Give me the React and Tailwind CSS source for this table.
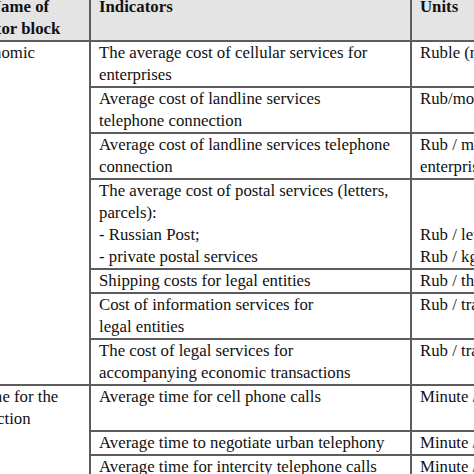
import React from "react";

const rows = [
  {
    left: [{ text: "Economic", ml: "ml-[5px]" }],
    span: 7,
    ind: ["The average cost of cellular services for", "enterprises"],
    units: ["Ruble (month)"],
  },
  {
    ind: ["Average cost of landline services", "telephone connection"],
    units: ["Rub/month"],
  },
  {
    ind: ["Average cost of landline services telephone", "connection"],
    units: ["Rub / month /", "enterprise"],
  },
  {
    ind: [
      "The average cost of postal services (letters,",
      "parcels):",
      "- Russian Post;",
      "- private postal services",
    ],
    units: ["\u00a0", "\u00a0", "Rub / letter", "Rub / kg"],
  },
  {
    ind: ["Shipping costs for legal entities"],
    units: ["Rub / thousand"],
  },
  {
    ind: ["Cost of information services for", "legal entities"],
    units: ["Rub / transaction"],
  },
  {
    ind: ["The cost of legal services for", "accompanying economic transactions"],
    units: ["Rub / transaction"],
  },
  {
    left: [
      { text: "Time for the", ml: "ml-[13px]" },
      { text: "transaction", ml: "ml-[-5px]" },
    ],
    span: 3,
    ind: ["Average time for cell phone calls", "\u00a0"],
    units: ["Minute / call"],
  },
  {
    ind: ["Average time to negotiate urban telephony"],
    units: ["Minute / call"],
  },
  {
    ind: ["Average time for intercity telephone calls"],
    units: ["Minute / call"],
  },
];

const Lines = ({ items }) =>
  items.map((t, i) => (
    <div key={i} className="whitespace-nowrap">
      {t}
    </div>
  ));

export default function App() {
  return (
    <div className="w-[474px] h-[474px] overflow-hidden bg-white font-['Liberation_Serif','Times_New_Roman',serif]">
      <table className="table-fixed w-[650px] border-collapse mt-[-6px] ml-[-40px] text-[16.8px] leading-[22px] text-[#111]">
        <thead>
          <tr className="bg-[#e4e4e4]">
            <th className="w-[129px] border-2 border-[#5c5c5c] p-0 text-left align-top font-bold">
              <div className="whitespace-nowrap ml-[27px]">Name of</div>
              <div className="whitespace-nowrap ml-[-10px]">indicator block</div>
            </th>
            <th className="w-[321px] border-2 border-[#5c5c5c] px-2 py-0 text-left align-top font-bold">
              Indicators
            </th>
            <th className="w-[200px] border-2 border-[#5c5c5c] px-2 py-0 text-left align-top font-bold">
              Units
            </th>
          </tr>
        </thead>
        <tbody>
          {rows.map((r, i) => (
            <tr key={i}>
              {r.left && (
                <td rowSpan={r.span} className="border-2 border-[#5c5c5c] p-0 align-top">
                  {r.left.map((l, j) => (
                    <div key={j} className={`whitespace-nowrap ${l.ml}`}>
                      {l.text}
                    </div>
                  ))}
                </td>
              )}
              <td className="border-2 border-[#5c5c5c] px-2 py-0 align-top">
                <Lines items={r.ind} />
              </td>
              <td className="border-2 border-[#5c5c5c] px-2 py-0 align-top">
                <Lines items={r.units} />
              </td>
            </tr>
          ))}
        </tbody>
      </table>
    </div>
  );
}
